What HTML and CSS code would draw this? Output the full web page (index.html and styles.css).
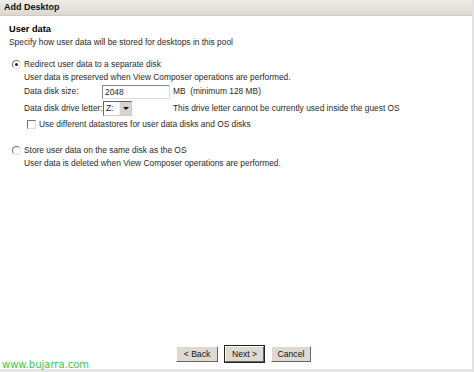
FILE: index.html
```html
<!DOCTYPE html>
<html lang="en">
<head>
    <meta charset="UTF-8">
    <title>Add Desktop</title>
    <link rel="stylesheet" href="styles.css">
</head>
<body>

<div id="wizard">
    <div class="title-bar">Add Desktop</div>

    <div class="page">
        <div class="section-head">
            <div class="section-title">User data</div>
            <div class="section-desc">Specify how user data will be stored for desktops in this pool</div>
        </div>

        <div class="option">
            <label class="radio-row"><span class="radio checked"></span>Redirect user data to a separate disk</label>
            <div class="option-body">
                <div class="note">User data is preserved when View Composer operations are performed.</div>
                <div class="field">
                    <span class="field-label">Data disk size:</span>
                    <span class="text-input">2048</span>
                    <span class="field-hint">MB&nbsp; (minimum 128 MB)</span>
                </div>
                <div class="field">
                    <span class="field-label">Data disk drive letter:</span>
                    <span class="select"><span class="select-value">Z:</span><span class="select-btn"><span class="arrow"></span></span></span>
                    <span class="field-hint drive-hint">This drive letter cannot be currently used inside the guest OS</span>
                </div>
                <label class="check-row"><span class="checkbox"></span>Use different datastores for user data disks and OS disks</label>
            </div>
        </div>

        <div class="option second">
            <label class="radio-row"><span class="radio"></span>Store user data on the same disk as the OS</label>
            <div class="option-body">
                <div class="note">User data is deleted when View Composer operations are performed.</div>
            </div>
        </div>
    </div>

    <div class="buttons">
        <button class="btn back">&lt; Back</button>
        <button class="btn next default">Next &gt;</button>
        <button class="btn cancel">Cancel</button>
    </div>

    <div class="watermark">www.bujarra.com</div>
</div>

</body>
</html>
```

FILE: styles.css
```css
body {
    margin: 0;
    font-family: 'Liberation Sans', Arial, sans-serif;
    font-size: 8.4px;
    line-height: 13px;
    color: #2a2a2a;
    background-color: #fff;
}
#wizard {
    width: 472px;
    height: 369px;
    border-right: 2px solid #e2e2e2;
    border-bottom: 3px solid #e4e4e4;
    position: relative;
    display: flex;
    flex-direction: column;
}
.title-bar {
    height: 15px;
    line-height: 15px;
    padding-left: 4px;
    font-weight: bold;
    font-size: 9px;
    color: #111;
    background: linear-gradient(#efede8, #dcd8d0);
    border-bottom: 1px solid #cfcbc3;
}
.page {
    padding: 7px 0 0 9px;
    flex: 1;
}
.section-title {
    font-weight: bold;
    font-size: 9.2px;
    color: #000;
}
.option {
    margin-top: 9px;
    padding-left: 3px;
}
.option.second {
    margin-top: 13px;
}
.radio-row, .check-row {
    display: flex;
    align-items: center;
    height: 13px;
}
.radio {
    width: 9px;
    height: 9px;
    border-radius: 50%;
    border: 1px solid #777;
    border-right-color: #ddd;
    border-bottom-color: #ddd;
    margin-right: 3px;
    position: relative;
    box-sizing: border-box;
}
.radio.checked::after {
    content: "";
    position: absolute;
    left: 2px;
    top: 2px;
    width: 3px;
    height: 3px;
    border-radius: 50%;
    background: #222;
}
.option-body {
    padding-left: 12px;
}
.field {
    display: flex;
    align-items: center;
    height: 15px;
    white-space: nowrap;
}
.field + .field {
    margin-top: 2px;
}
.field-label {
    width: 78px;
    flex-shrink: 0;
}
.text-input {
    width: 68px;
    height: 14px;
    box-sizing: border-box;
    border: 1px solid #888;
    border-right-color: #ddd;
    border-bottom-color: #ddd;
    padding: 0 2px;
    line-height: 12px;
}
.field-hint {
    margin-left: 3px;
}
.drive-hint {
    margin-left: 41px;
}
.select {
    display: flex;
    width: 29px;
    height: 15px;
    box-sizing: border-box;
    margin-left: 1px;
    flex-shrink: 0;
    border: 1px solid #666;
    border-right-color: #ccc;
    border-bottom-color: #ccc;
}
.select-value {
    flex: 1;
    padding-left: 2px;
    line-height: 13px;
}
.select-btn {
    width: 11px;
    background: #d8d4cc;
    border-left: 1px solid #eee;
    display: flex;
    align-items: center;
    justify-content: center;
}
.arrow {
    width: 0;
    height: 0;
    border-left: 3px solid transparent;
    border-right: 3px solid transparent;
    border-top: 3px solid #111;
}
.check-row {
    margin-top: 2px;
    padding-left: 3px;
}
.checkbox {
    width: 9px;
    height: 9px;
    box-sizing: border-box;
    border: 1px solid #777;
    border-right-color: #ddd;
    border-bottom-color: #ddd;
    margin-right: 3px;
}
.buttons {
    display: flex;
    justify-content: center;
    gap: 7px;
    padding-left: 15px;
    margin-bottom: 7px;
}
.btn {
    font-family: 'Liberation Sans', Arial, sans-serif;
    font-size: 8.6px;
    color: #111;
    height: 16px;
    padding: 0;
    background-color: #dedad2;
    border: 1px solid;
    border-color: #fff #666 #666 #fff;
    line-height: 13px;
}
.btn.back {
    width: 42px;
}
.btn.next {
    width: 39px;
}
.btn.cancel {
    width: 40px;
}
.btn.default {
    outline: 1px solid #222;
    outline-offset: 0;
}
.watermark {
    position: absolute;
    left: 2px;
    bottom: -2px;
    font-family: 'DejaVu Sans', sans-serif;
    font-size: 10px;
    color: #3dc93d;
}
```
